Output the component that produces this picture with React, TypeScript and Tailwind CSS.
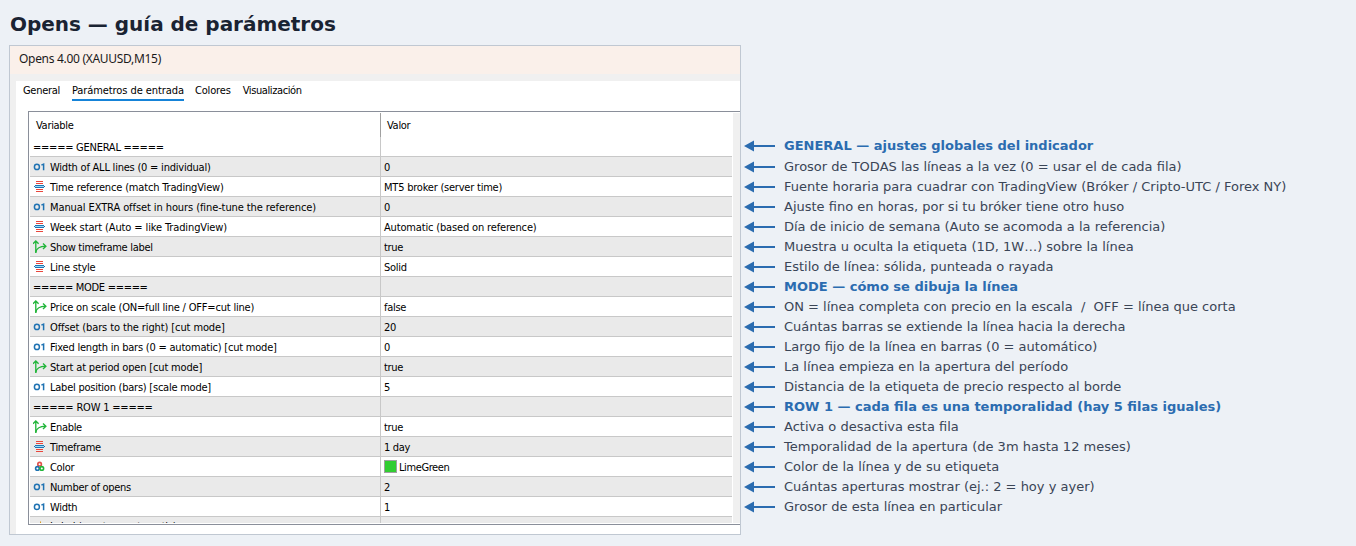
import type { ReactNode } from "react";

// ============================================================
// Types
// ============================================================

type IconKind = "int" | "enum" | "bool" | "color" | "string";

interface Param {
  icon?: IconKind;
  name: string;
  value?: string;
  note?: string;
  /** letter spacing of the name */
  nameClass?: string;
  valueClass?: string;
}

// ============================================================
// Data
// ============================================================

const params: Param[] = [
  { name: "===== GENERAL =====", note: "GENERAL — ajustes globales del indicador", nameClass: "tracking-[-0.25px]" },
  { icon: "int", name: "Width of ALL lines (0 = individual)", value: "0", note: "Grosor de TODAS las líneas a la vez (0 = usar el de cada fila)", nameClass: "tracking-[-0.22px]" },
  { icon: "enum", name: "Time reference (match TradingView)", value: "MT5 broker (server time)", note: "Fuente horaria para cuadrar con TradingView (Bróker / Cripto-UTC / Forex NY)", nameClass: "tracking-[-0.17px]", valueClass: "tracking-[-0.22px]" },
  { icon: "int", name: "Manual EXTRA offset in hours (fine-tune the reference)", value: "0", note: "Ajuste fino en horas, por si tu bróker tiene otro huso", nameClass: "tracking-[-0.09px]" },
  { icon: "enum", name: "Week start (Auto = like TradingView)", value: "Automatic (based on reference)", note: "Día de inicio de semana (Auto se acomoda a la referencia)", nameClass: "tracking-[-0.12px]", valueClass: "tracking-[-0.16px]" },
  { icon: "bool", name: "Show timeframe label", value: "true", note: "Muestra u oculta la etiqueta (1D, 1W…) sobre la línea" },
  { icon: "enum", name: "Line style", value: "Solid", note: "Estilo de línea: sólida, punteada o rayada", nameClass: "tracking-[-0.2px]" },
  { name: "===== MODE =====", note: "MODE — cómo se dibuja la línea" },
  { icon: "bool", name: "Price on scale (ON=full line / OFF=cut line)", value: "false", note: "ON = línea completa con precio en la escala  /  OFF = línea que corta", nameClass: "tracking-[-0.19px]" },
  { icon: "int", name: "Offset (bars to the right) [cut mode]", value: "20", note: "Cuántas barras se extiende la línea hacia la derecha", nameClass: "tracking-[-0.11px]" },
  { icon: "int", name: "Fixed length in bars (0 = automatic) [cut mode]", value: "0", note: "Largo fijo de la línea en barras (0 = automático)", nameClass: "tracking-[-0.21px]" },
  { icon: "bool", name: "Start at period open [cut mode]", value: "true", note: "La línea empieza en la apertura del período", nameClass: "tracking-[-0.17px]" },
  { icon: "int", name: "Label position (bars) [scale mode]", value: "5", note: "Distancia de la etiqueta de precio respecto al borde", nameClass: "tracking-[-0.24px]" },
  { name: "===== ROW 1 =====", note: "ROW 1 — cada fila es una temporalidad (hay 5 filas iguales)", nameClass: "tracking-[-0.2px]" },
  { icon: "bool", name: "Enable", value: "true", note: "Activa o desactiva esta fila" },
  { icon: "enum", name: "Timeframe", value: "1 day", note: "Temporalidad de la apertura (de 3m hasta 12 meses)" },
  { icon: "color", name: "Color", value: "LimeGreen", note: "Color de la línea y de su etiqueta", valueClass: "tracking-[-0.4px]" },
  { icon: "int", name: "Number of opens", value: "2", note: "Cuántas aperturas mostrar (ej.: 2 = hoy y ayer)" },
  { icon: "int", name: "Width", value: "1", note: "Grosor de esta línea en particular" },
  // only the top of this row shows above the lower frame
  { icon: "string", name: "Label (empty = automatic)", nameClass: "-mt-px" },
];

// ============================================================
// Icons
// ============================================================

function ParamIcon({ kind }: { kind: IconKind }) {
  const shapes: Record<IconKind, ReactNode> = {
    int: (
      <g fill="none" stroke="#1f72b2" strokeWidth="1.5">
        <ellipse cx="3.9" cy="7.9" rx="2.5" ry="2.7" />
        <path d="M8.4 6.2 10.6 5.1V11.2" />
      </g>
    ),
    enum: (
      <g shapeRendering="crispEdges">
        <path d="M3 2h7v1H3zM3 4h7v1H3zM3 10h7v1H3zM3 12h7v1H3z" fill="#e8463c" />
        <path d="M2 6h9v3H2zM1 7h11v1H1z" fill="#1f72b2" />
        <path d="M2 7h9v1H2z" fill="#9bdcf5" />
      </g>
    ),
    bool: (
      <g fill="none" stroke="#22b53a" strokeWidth="1.35">
        <path d="M2.8 14V2M0 4.7 2.8 1.9 5.6 4.7" />
        <path d="M2.8 13.5C3.2 9.6 6 7.5 12.8 7.2M10 4.4 12.9 7.2 10 10" />
      </g>
    ),
    color: (
      <g fill="#ffffff" strokeWidth="1.6">
        <circle cx="6.6" cy="5.2" r="1.8" stroke="#e0504a" />
        <circle cx="4.4" cy="9.4" r="1.8" stroke="#1f72b2" />
        <circle cx="8.8" cy="9.4" r="1.8" stroke="#22b53a" />
      </g>
    ),
    string: <path d="M7.5 2.5V13" fill="none" stroke="#d99a20" />,
  };
  return (
    <svg width="14" height="15" viewBox="0 0 14 15" className="shrink-0">
      {shapes[kind]}
    </svg>
  );
}

function Arrow() {
  return (
    <svg width="32" height="12" viewBox="0 0 32 12" className="shrink-0">
      <path d="M10 0.5V11.5L0 6z" fill="#2b6cb0" />
      <path d="M9 6H31" stroke="#2b6cb0" strokeWidth="2" />
    </svg>
  );
}

// ============================================================
// Window
// ============================================================

function ParamRow({ param, index }: { param: Param; index: number }) {
  const bg = index % 2 === 1 ? "bg-[#eaeaea]" : "bg-white";
  return (
    <div className={`flex h-5 shrink-0 border-b border-[#c8c8c8] leading-[21px] ${bg}`}>
      <div className="flex w-[351px] shrink-0 items-start border-r border-[#c8c8c8] pl-[3px]">
        {param.icon && (
          <span className="flex w-[17px] shrink-0 pt-[2px]">
            <ParamIcon kind={param.icon} />
          </span>
        )}
        <span className={param.nameClass}>{param.name}</span>
      </div>
      <div className="flex items-start pl-[3px]">
        {param.icon === "color" && (
          <span className="mt-[3px] mr-[2px] size-[13px] border border-[#a0a0a0] bg-[#32cd32]" />
        )}
        <span className={param.valueClass}>{param.value}</span>
      </div>
    </div>
  );
}

function SettingsWindow() {
  return (
    <div className="flex h-[490px] w-[732px] shrink-0 flex-col border border-[#c0c8d2] bg-[#f0f0f0]">
      <div className="h-7 shrink-0 bg-[#faf0ea] pl-[9px] font-['Noto_Sans'] text-[12px] leading-[26px] tracking-[-0.3px] text-[#1a1a1a]">
        Opens 4.00 (XAUUSD,M15)
      </div>
      <div className="mt-[7px] ml-[6px] flex min-h-0 flex-1 flex-col bg-white font-['DejaVu_Sans_Condensed','DejaVu_Sans'] text-[11px] tracking-[-0.3px] text-black">
        <div className="flex h-[30px] shrink-0 items-start gap-3 pl-[7px]">
          <span className="h-5 leading-[19px]">General</span>
          <span className="h-5 border-b-2 border-[#1583d8] leading-[19px] tracking-[-0.08px]">
            Parámetros de entrada
          </span>
          <span className="-ml-px h-5 leading-[19px] tracking-[-0.15px]">Colores</span>
          <span className="h-5 leading-[19px] tracking-[-0.4px]">Visualización</span>
        </div>
        <div className="ml-3 flex h-[414px] border-y border-l border-[#8a8f9a]">
          <div className="ml-px flex w-[702px] shrink-0 flex-col overflow-hidden pt-px pb-px">
            <div className="flex h-6 shrink-0">
              <div className="w-[351px] border-r border-[#a0a0a0] pl-[6px] leading-[25px]">Variable</div>
              <div className="pl-[6px] leading-[25px]">Valor</div>
            </div>
            <div className="flex min-h-0 flex-1 flex-col overflow-hidden">
              {params.map((p, i) => (
                <ParamRow key={p.name} param={p} index={i} />
              ))}
            </div>
          </div>
          <div className="my-px ml-px flex-1 bg-[#f0f0f0]" />
        </div>
      </div>
    </div>
  );
}

// ============================================================
// Page
// ============================================================

export default function App() {
  return (
    <div className="h-[546px] w-[1356px] overflow-hidden bg-[#edf1f6] pl-[9px] font-['DejaVu_Sans',sans-serif]">
      <h1 className="h-[45px] pl-px text-[20px] leading-[48px] font-bold tracking-[-0.02px] text-[#1a2332]">
        Opens — guía de parámetros
      </h1>
      <div className="flex">
        <SettingsWindow />
        <ul className="flex flex-col pt-[91px] pl-[3px]">
          {params
            .filter((p) => p.note)
            .map((p) => (
              <li
                key={p.name}
                className="flex h-5 items-center gap-2 text-[13px] whitespace-pre first:mb-px"
              >
                <Arrow />
                <span className={p.icon ? "text-[#3a4556]" : "font-bold text-[#2b6cb0]"}>{p.note}</span>
              </li>
            ))}
        </ul>
      </div>
    </div>
  );
}
